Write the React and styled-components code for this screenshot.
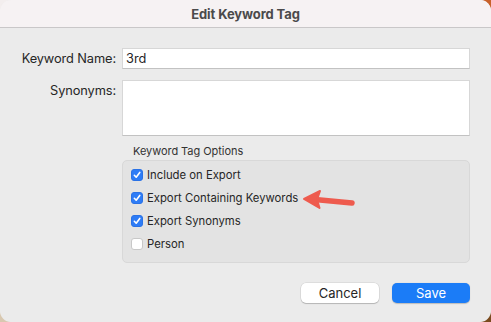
import React from "react";
import styled, { createGlobalStyle } from "styled-components";

const Global = createGlobalStyle`
  html, body { margin: 0; padding: 0; }
  body {
    width: 491px; height: 322px; overflow: hidden;
    background:
      radial-gradient(circle at 100% 0%, #c8612a 0, #c8612a 8px, transparent 12px),
      radial-gradient(circle at 100% 100%, #7a4a1e 0, #7a4a1e 8px, transparent 12px),
      radial-gradient(circle at 0% 100%, #d8c8b0 0, #d8c8b0 8px, transparent 12px),
      #f3eeee;
    font-family: Inter, "Noto Sans", sans-serif;
  }
`;

const Dialog = styled.div`
  width: 491px; height: 322px; box-sizing: border-box;
  border-radius: 11px; overflow: hidden;
  background: #ebebeb;
  display: flex; flex-direction: column;
`;

const TitleBar = styled.div`
  height: 28px; flex: none; box-sizing: border-box;
  background: #f6f2f3; border-bottom: 1px solid #c9c7c8;
  display: flex; align-items: center; justify-content: center;
  font-size: 13px; font-weight: 700; color: #4b4a4b; letter-spacing: -0.1px;
`;

const Body = styled.div`
  flex: 1; display: flex; flex-direction: column;
  padding: 20px 21px 0 0;
`;

const FieldRow = styled.div`
  display: grid; grid-template-columns: 116px 1fr; column-gap: 6px;
  align-items: ${p => (p.$top ? "start" : "center")};
  margin-bottom: ${p => p.$gap || 0}px;
`;

const Label = styled.div`
  text-align: right; font-size: 12.8px; color: #262626;
  padding-top: ${p => p.$pt || 0}px; letter-spacing: -0.1px;
`;

const Input = styled.div`
  height: 21px; box-sizing: border-box; background: #fff;
  border: 1px solid #d7d7d7; border-bottom-color: #c2c2c2;
  font-size: 12.8px; color: #262626; padding: 0 3px;
  display: flex; align-items: center;
`;

const TextArea = styled(Input)`
  height: 56px;
`;

const GroupTitle = styled.div`
  margin: 9px 0 0 133px; font-size: 11px; line-height: 13px; color: #333; letter-spacing: -0.05px;
`;

const GroupBox = styled.div`
  margin: 2px 0 0 122px; height: 103px; box-sizing: border-box;
  background: #e3e3e3; border: 1px solid #d8d8d8; border-radius: 5px;
  padding: 5px 8px; display: flex; flex-direction: column; gap: 5px;
  position: relative;
`;

const CheckRow = styled.div`
  height: 18px; display: flex; align-items: center; gap: 4px;
  font-size: 11.3px; color: #262626; letter-spacing: 0;
`;

const Box = styled.span`
  width: 12px; height: 12px; box-sizing: border-box; border-radius: 3px;
  flex: none; display: flex; align-items: center; justify-content: center;
  background: ${p => (p.$on ? "#2e7cf6" : "#fff")};
  border: 1px solid ${p => (p.$on ? "#2a72e6" : "#c8c8c8")};
`;

const Arrow = styled.svg`
  position: absolute; left: 178px; top: 27px;
`;

const Footer = styled.div`
  margin-top: auto; padding: 0 21px 19px 0;
  display: flex; justify-content: flex-end; gap: 13px;
`;

const Button = styled.div`
  width: 78px; height: 20px; box-sizing: border-box; border-radius: 5px;
  display: flex; align-items: center; justify-content: center;
  font-size: 13px;
  background: ${p => (p.$primary ? "#1b7cf7" : "#fff")};
  color: ${p => (p.$primary ? "#fff" : "#262626")};
  box-shadow: ${p => (p.$primary ? "0 0.5px 1px rgba(0,0,0,0.2)" : "0 0 0 0.5px rgba(0,0,0,0.12), 0 1px 1px rgba(0,0,0,0.18)")};
`;

const Check = () => (
  <svg width="8" height="8" viewBox="0 0 9 9">
    <path d="M1.5 4.8 L3.6 7 L7.6 1.6" fill="none" stroke="#fff" strokeWidth="1.8" strokeLinecap="round" strokeLinejoin="round" />
  </svg>
);

const options = [
  ["Include on Export", true],
  ["Export Containing Keywords", true],
  ["Export Synonyms", true],
  ["Person", false],
];

export default function App() {
  return (
    <>
      <Global />
      <Dialog>
        <TitleBar>Edit Keyword Tag</TitleBar>
        <Body>
          <FieldRow $gap={11}>
            <Label>Keyword Name:</Label>
            <Input>3rd</Input>
          </FieldRow>
          <FieldRow $top>
            <Label $pt={3}>Synonyms:</Label>
            <TextArea />
          </FieldRow>
          <GroupTitle>Keyword Tag Options</GroupTitle>
          <GroupBox>
            {options.map(([t, on]) => (
              <CheckRow key={t}>
                <Box $on={on}>{on && <Check />}</Box>
                {t}
              </CheckRow>
            ))}
            <Arrow width="56" height="24" viewBox="0 0 56 24">
              <path d="M51 15 L14 11.5" stroke="#ee5b4e" strokeWidth="5.5" strokeLinecap="round" fill="none" />
              <path d="M3 11 L19 3 L16 11.5 L18.5 20 Z" fill="#ee5b4e" stroke="#ee5b4e" strokeWidth="2" strokeLinejoin="round" />
            </Arrow>
          </GroupBox>
        </Body>
        <Footer>
          <Button>Cancel</Button>
          <Button $primary>Save</Button>
        </Footer>
      </Dialog>
    </>
  );
}
